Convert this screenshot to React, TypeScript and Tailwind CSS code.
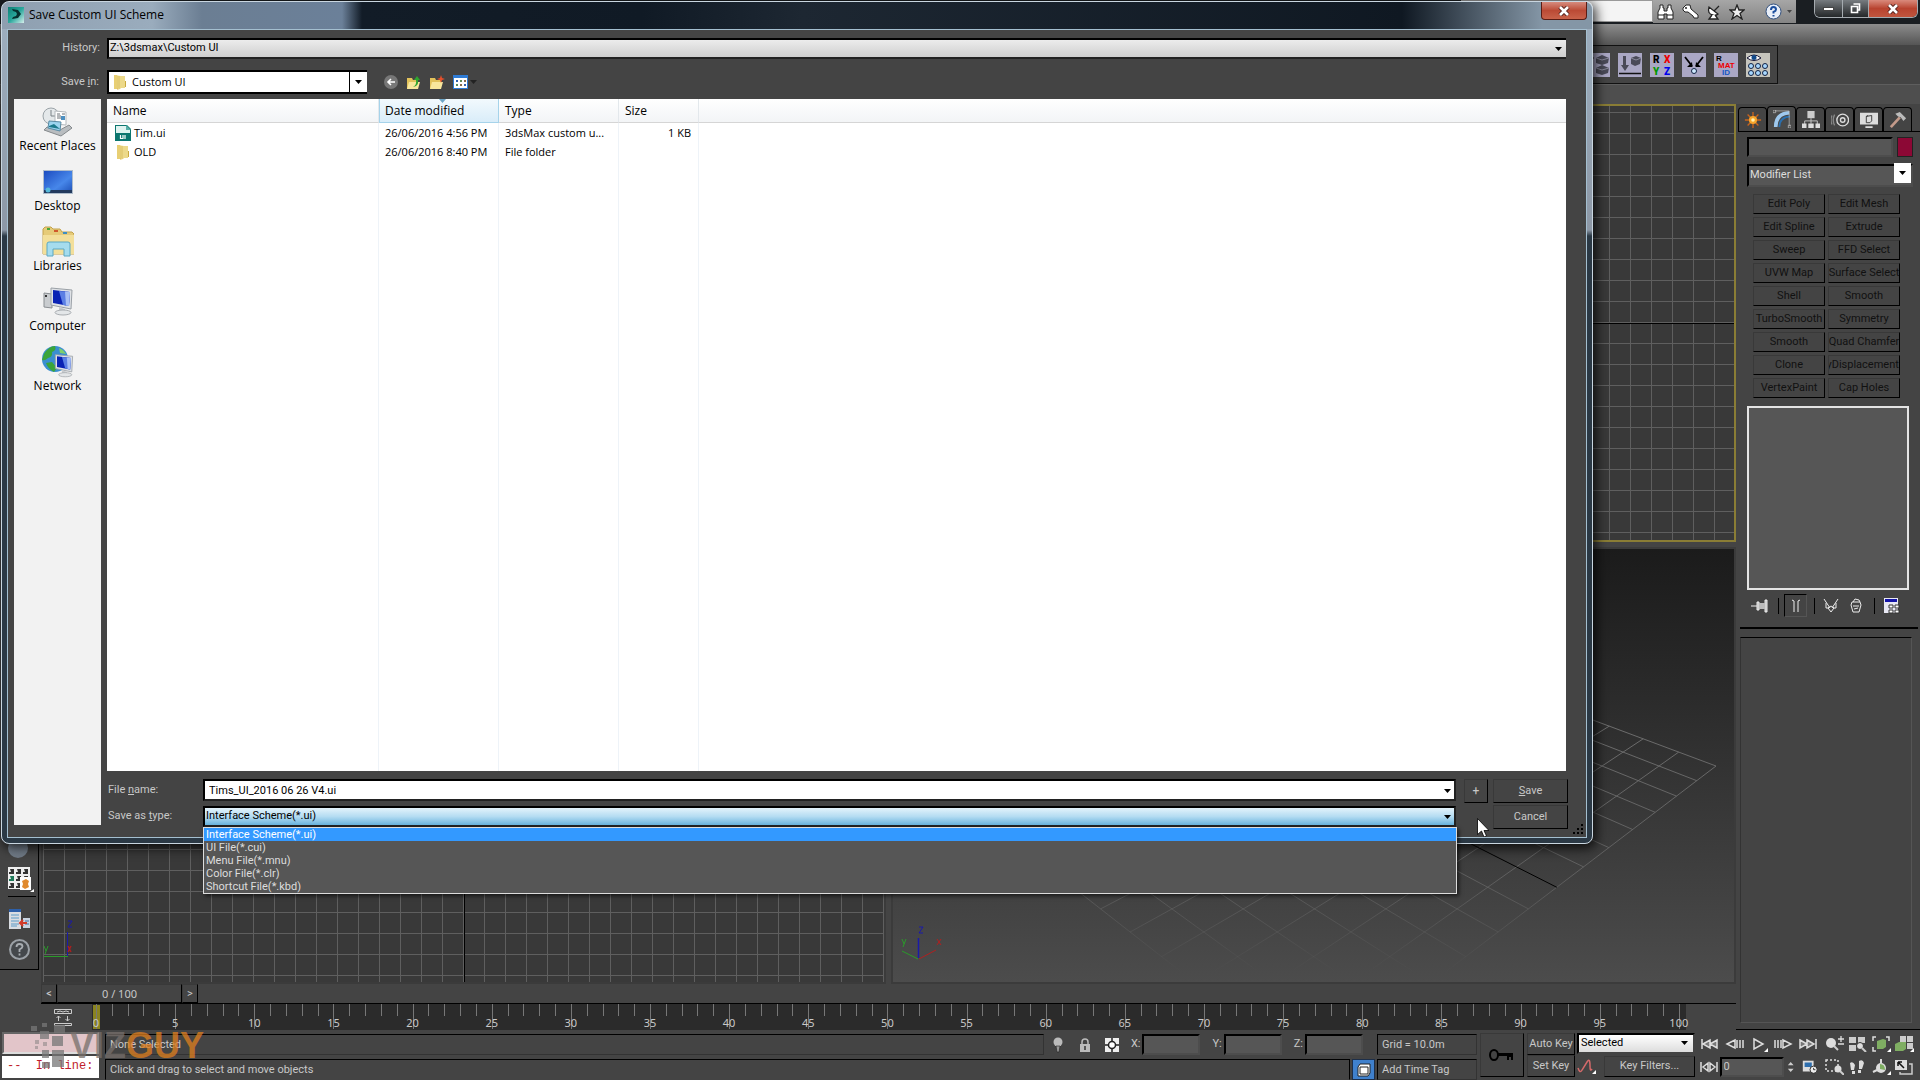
import type { ReactNode } from "react";
import { clsx } from "clsx";

const MODIFIERS = [
  "Edit Poly", "Edit Mesh",
  "Edit Spline", "Extrude",
  "Sweep", "FFD Select",
  "UVW Map", "Surface Select",
  "Shell", "Smooth",
  "TurboSmooth", "Symmetry",
  "Smooth", "Quad Chamfer",
  "Clone", "yDisplacementl",
  "VertexPaint", "Cap Holes",
];

const FILE_TYPES = [
  "Interface Scheme(*.ui)",
  "UI File(*.cui)",
  "Menu File(*.mnu)",
  "Color File(*.clr)",
  "Shortcut File(*.kbd)",
];

// Sunken fields have a black top and left edge, raised buttons a black bottom and right one.
const SUNKEN = "border-2 border-t-black border-l-black border-r-[#4d4d4d] border-b-[#4d4d4d]";
const RAISED = "border border-t-[#393939] border-l-[#393939] border-r-black border-b-black";

function Caret({ className }: { className?: string }) {
  return (
    <svg className={clsx("pointer-events-none", className)} width="7" height="4" viewBox="0 0 7 4" aria-hidden="true">
      <path d="M0 0h7L3.5 4z" fill="#000" />
    </svg>
  );
}

function FolderIcon() {
  return (
    <svg width="14" height="16" viewBox="0 0 14 16" aria-hidden="true">
      <path d="M1 1h4v14H1z" fill="#e8cf74" />
      <path d="M4 1l4 1v13l-4-1z" fill="#f6e9ae" />
      <path d="M7 2h5v12H7z" fill="#ecd98a" />
      <path d="M7 2v13l-3 1V2z" fill="#dcbf5e" opacity=".7" />
      <path d="M12 7h1v6h-1z" fill="#c9a93f" />
    </svg>
  );
}

function UiFileIcon() {
  return (
    <svg width="16" height="16" viewBox="0 0 16 16" aria-hidden="true">
      <path d="M0 0h12l4 4v12H0z" fill="#0c766f" />
      <path d="M1 1h10v4h4v3H1z" fill="#dff3f0" />
      <path d="M11 0l5 5h-5z" fill="#58b0a9" />
      <path d="M5.500 10v3.500h2.500V10M10 10v4" fill="none" stroke="#fff" strokeWidth="1.200" />
    </svg>
  );
}

function MaxLogo() {
  return (
    <svg width="16" height="16" viewBox="0 0 16 16" aria-hidden="true">
      <defs>
        <linearGradient id="logo" x1="0" y1="0" x2="1" y2="1">
          <stop offset="0" stopColor="#0d7f76" />
          <stop offset=".5" stopColor="#2aa79c" />
          <stop offset="1" stopColor="#d6efec" />
        </linearGradient>
      </defs>
      <rect width="16" height="16" fill="url(#logo)" />
      <path d="M4 2l6 1 3 4-3 4-6 1 1-2 3-1 1-2-1-2-3-1z" fill="#06302f" />
    </svg>
  );
}

function RecentPlacesIcon() {
  return (
    <svg width="32" height="32" viewBox="0 0 32 32" aria-hidden="true">
      <circle cx="9" cy="10" r="8" fill="#e4e8ea" stroke="#9ba3a8" />
      <path d="M9 4v6h4" stroke="#7b8287" fill="none" />
      <path d="M13 5l11 1v13l-11-1z" fill="#fff" stroke="#b3b8bc" />
      <path d="M15 8h3M20 8h3M15 10h4M15 12h4" stroke="#6c7378" />
      <path d="M19 10h4v4h-4z" fill="#4d8fc0" />
      <path d="M2 24l17 6 11-8-3-3-9 5-13-3z" fill="#b9bdc0" stroke="#85898c" />
      <path d="M7 15l12 1-1 9-12-3z" fill="#9cd4ef" stroke="#5a8ba5" />
      <path d="M7 20l5-2 6 5-11-2z" fill="#1c7a8c" />
    </svg>
  );
}

function DesktopIcon() {
  return (
    <svg width="32" height="32" viewBox="0 0 32 32" aria-hidden="true">
      <defs>
        <linearGradient id="desk" x1="0" y1="0" x2="1" y2="1">
          <stop offset="0" stopColor="#1c4cc0" />
          <stop offset=".6" stopColor="#4787ea" />
          <stop offset="1" stopColor="#1d4fb6" />
        </linearGradient>
      </defs>
      <rect x="1" y="4" width="30" height="24" fill="#aebccb" />
      <rect x="2" y="5" width="28" height="22" fill="url(#desk)" />
      <path d="M2 24h28v3H2z" fill="#233a5e" />
      <circle cx="6" cy="24" r="2.500" fill="#56b9d9" />
    </svg>
  );
}

function LibrariesIcon() {
  return (
    <svg width="32" height="32" viewBox="0 0 32 32" aria-hidden="true">
      <path d="M1 3l2-2h6l2 2h7l2 3h10l2 2v20H1z" fill="#e6cb79" stroke="#c3a24c" />
      <path d="M5 2h3v2H5z" fill="#47a83c" />
      <path d="M12 4h4v2h-4z" fill="#d0592c" />
      <path d="M21 6h4v2h-4z" fill="#3f8fc4" />
      <path d="M1 9h31v19H1z" fill="#f3df9a" />
      <path d="M5 18q0-2 2-2h19q2 0 2 2v12h-6v-7H11v7H5z" fill="#a5dcee" stroke="#5aa8c4" />
    </svg>
  );
}

function Monitor() {
  return (
    <>
      <path d="M9 2l21 2-1 19-20-4z" fill="#dfe2e6" stroke="#9aa0a6" />
      <path d="M11 4l17 2-1 14-16-3z" fill="#0a22b4" />
      <path d="M17 5l11 1-1 14-6-1z" fill="#5b7fe4" />
      <path d="M23 5.500l5 .5-1 14-3-.5z" fill="#a9c0f4" />
      <path d="M17 21l6 2v3h-6z" fill="#c7cbcf" />
      <ellipse cx="21" cy="26.500" rx="8" ry="2.500" fill="#e3e6e8" stroke="#a9adb1" />
    </>
  );
}

function ComputerIcon() {
  return (
    <svg width="32" height="32" viewBox="0 0 32 32" aria-hidden="true">
      <path d="M2 7l8 1v14l-8-1z" fill="#c9cccf" stroke="#8a8e92" />
      <path d="M3 10h2" stroke="#333" strokeWidth="2" />
      <Monitor />
    </svg>
  );
}

function NetworkIcon() {
  return (
    <svg width="32" height="32" viewBox="0 0 32 32" aria-hidden="true">
      <circle cx="13" cy="13" r="13" fill="#3b8fd0" />
      <path d="M2 8q5-8 11-8 2 4-3 6 1 5-4 6-3 3-6 2zM4 17l6-1 5 6-3 4q-6-3-8-9z" fill="#3ba53a" />
      <path d="M17 2q5 2 7 6l-6-1z" fill="#7fd06c" />
      <g transform="translate(6 7) scale(.82)">
        <Monitor />
      </g>
    </svg>
  );
}

const PLACES = [
  { name: "Recent Places", Icon: RecentPlacesIcon },
  { name: "Desktop", Icon: DesktopIcon },
  { name: "Libraries", Icon: LibrariesIcon },
  { name: "Computer", Icon: ComputerIcon },
  { name: "Network", Icon: NetworkIcon },
];

function CloseGlyph() {
  return (
    <svg width="12" height="10" viewBox="0 0 12 10" aria-hidden="true">
      <path d="M2 1l8 8M10 1L2 9" stroke="#53201a" strokeWidth="4.500" />
      <path d="M2 1l8 8M10 1L2 9" stroke="#fff" strokeWidth="2.600" />
    </svg>
  );
}

/* ---------- Application frame behind the dialog ---------- */

function TopBar() {
  return (
    <header>
      <div className="flex h-6 justify-end bg-[#1a1e22]">
        <input
          aria-label="Type a keyword or phrase"
          className="h-[22px] w-48 border border-[#999] bg-[#f4f4f4] px-2 text-[11px]"
        />
        <div className="flex h-[23px] w-[143px] items-center gap-2 bg-gradient-to-b from-[#a6a6a6] to-[#858585] pl-1">
          <button aria-label="Search">
            <svg width="17" height="16" viewBox="0 0 17 16">
              <path d="M3 1h3v3h1v3h3V4h1V1h3v3l2 4v7h-6v-5H7v5H1V8l2-4z" fill="#fff" stroke="#222" />
              <path d="M1 11h6M10 11h6" stroke="#222" />
            </svg>
          </button>
          <button aria-label="Subscription">
            <svg width="17" height="16" viewBox="0 0 17 16">
              <path d="M1 4l3-3h4l1 4 7 6v3h-4l-1-2-5-4H3L1 6z" fill="#fff" stroke="#222" />
              <circle cx="4" cy="4" r="1" fill="#222" />
            </svg>
          </button>
          <button aria-label="Exchange">
            <svg width="14" height="16" viewBox="0 0 14 16">
              <path d="M2 3q-2 7 4 8 3 1 5-1z" fill="#fff" stroke="#222" strokeWidth="1.300" />
              <path d="M7 7l5-5M5 11l-3 4h9l-3-4" fill="#fff" stroke="#222" strokeWidth="1.300" />
            </svg>
          </button>
          <button aria-label="Favorites">
            <svg width="16" height="16" viewBox="0 0 16 16">
              <path d="M8 1l2 5h5l-4 3.500L13 15l-5-3.500L3 15l2-5.500L1 6h5z" fill="#eee" stroke="#222" strokeWidth="1.300" />
            </svg>
          </button>
          <button aria-label="Help" className="ml-3 flex items-center gap-[5px]">
            <svg width="17" height="17" viewBox="0 0 17 17">
              <circle cx="8.500" cy="8.500" r="7.500" fill="#e8eef8" stroke="#33517f" />
              <path d="M6 7q0-3 2.500-3T11 6.500Q11 8 8.500 9v1.500M8.500 12v1.600" fill="none" stroke="#1d4f9e" strokeWidth="2" />
            </svg>
            <svg width="5" height="3" viewBox="0 0 5 3">
              <path d="M0 0h5L2.500 3z" fill="#444" />
            </svg>
          </button>
        </div>
        <div className="flex w-[124px] items-start justify-end pr-[2px]">
          <div className="flex overflow-hidden rounded-b-md border border-t-0 border-[#a5abb0]">
            <button aria-label="Minimize" className="flex h-[17px] w-[28px] items-center justify-center border-r border-[#a5abb0] bg-gradient-to-b from-[#777c80] to-[#25282a]">
              <span className="h-1 w-[11px] border border-[#444] bg-white" />
            </button>
            <button aria-label="Restore" className="flex h-[17px] w-[26px] items-center justify-center border-r border-[#a5abb0] bg-gradient-to-b from-[#777c80] to-[#25282a]">
              <svg width="11" height="11" viewBox="0 0 11 11">
                <path d="M3.500 1h6v6h-2M1.500 3.500h6v6h-6z" fill="none" stroke="#fff" strokeWidth="1.600" />
              </svg>
            </button>
            <button aria-label="Close" className="flex h-[17px] w-[48px] items-center justify-center bg-gradient-to-b from-[#d98a7c] via-[#b8432f] to-[#c0553e]">
              <CloseGlyph />
            </button>
          </div>
        </div>
      </div>
      <div className="h-[21px] bg-gradient-to-b from-[#8d8d8d] to-[#555]" />
      <div className="flex h-[39px] justify-end bg-[#444] pr-[142px]">
        <div className="flex h-[39px] items-center gap-2 border-t border-r border-b border-[#111] pr-[7px]">
          <svg width="24" height="24" viewBox="0 0 24 24" aria-hidden="true">
            <rect width="24" height="24" fill="#aaa7c4" />
            <path d="M3 5h5M5 3v5" stroke="#333" />
            <path d="M10 5l6-3 7 3-1 5-6 2-6-2zM10 15l6-3 7 3-1 5-6 2-6-2z" fill="#4a4a58" />
            <path d="M10 5l6 2 7-2M10 15l6 2 7-2" stroke="#8a8a9c" fill="none" />
          </svg>
          <svg width="24" height="24" viewBox="0 0 24 24" aria-hidden="true">
            <rect width="24" height="24" fill="#aaa7c4" />
            <path d="M5 3h3v9h3l-4 6-4-6h2zM13 5l5-2 5 2-1 6-5 2-4-2z" fill="#4a4a58" />
            <path d="M13 5l5 2 5-2" stroke="#8a8a9c" fill="none" />
            <path d="M1 20.500h22" stroke="#111" strokeWidth="1.500" />
          </svg>
          <svg width="24" height="24" viewBox="0 0 24 24" aria-hidden="true" className="text-[10px] font-black">
            <rect width="24" height="24" fill="#aaa7c4" />
            <text x="3" y="10">R</text>
            <text x="14" y="10" fill="#e00">X</text>
            <text x="3" y="22" fill="#090">Y</text>
            <text x="14" y="22" fill="#00e">Z</text>
          </svg>
          <svg width="24" height="24" viewBox="0 0 24 24" aria-hidden="true">
            <rect width="24" height="24" fill="#aaa7c4" />
            <path d="M3 4l7 9M21 4l-7 9" stroke="#000" strokeWidth="1.800" />
            <path d="M10.500 14H5l5-5zM13.500 14H19l-5-5z" fill="#000" />
            <circle cx="12" cy="18" r="2.500" fill="#cfeaff" stroke="#124" />
          </svg>
          <svg width="24" height="24" viewBox="0 0 24 24" aria-hidden="true" className="font-['Liberation_Sans',sans-serif] text-[8px] font-bold">
            <rect width="24" height="24" fill="#aaa7c4" />
            <text x="2" y="8">R</text>
            <text x="4" y="15" fill="#e00">MAT</text>
            <text x="8" y="22" fill="#1458c8">ID</text>
          </svg>
          <svg width="24" height="24" viewBox="0 0 24 24" aria-hidden="true">
            <rect width="24" height="24" fill="#c6c5bd" />
            <path d="M1 5q7-6 14 0-7 5-14 0z" fill="#fff" stroke="#113" />
            <circle cx="8" cy="4.500" r="2.500" fill="#124a8a" />
            {[5, 12, 19].map((x) => (
              <g key={x} fill="#a8d8ff" stroke="#124">
                <circle cx={x} cy="13" r="2.500" />
                <circle cx={x} cy="20" r="2.500" />
              </g>
            ))}
          </svg>
        </div>
      </div>
      <div className="h-5 border-t border-[#5e5e5e] bg-[#4e4e4e]" />
    </header>
  );
}

function LeftTools() {
  return (
    <div className="mb-[60px] flex w-[39px] flex-none flex-col justify-end border-r border-b border-black pb-2 pl-2">
      <div className="h-5 w-5 rounded-full bg-gradient-to-b from-[#8a97a6] to-[#6e7884]" />
      <svg className="mt-[9px]" width="27" height="27" viewBox="0 0 27 27" aria-hidden="true">
        <rect width="22" height="22" fill="#eee" />
        {[2, 9, 16].map((x) =>
          [2, 9, 16].map((y) => (
            <path key={`${x}${y}`} d={`M${x} ${y}h4v5h-5v-2h2z`} fill={y === 9 && x === 2 ? "#1f7a5a" : "#333"} />
          )),
        )}
        <rect x="12" y="10" width="11" height="13" fill="#fff" />
        <path d="M14 14l4-2 3 2-1 3 1 3-4 2-3-2 1-3z" fill="#e08a2e" />
        <path d="M26 22v3h-4z" fill="#fff" />
      </svg>
      <hr className="mt-[2px] w-[28px] border-black" />
      <svg className="mt-3" width="23" height="21" viewBox="0 0 23 21" aria-hidden="true">
        <path d="M1 1h12v19H1z" fill="#d9dde2" />
        <path d="M1 0h12v3H1z" fill="#2d5fa8" />
        <path d="M3 6h8M3 9h8M3 12h8M3 15h8M3 17h6" stroke="#5d9bc7" />
        <path d="M15 9h7v10h-7z" fill="#c9d4e2" />
        <path d="M17 12h4M17 15h4" stroke="#3d6ea5" />
        <path d="M19 14h-7m3-3l-3 3 3 3" stroke="#d23a2a" strokeWidth="2" fill="none" />
      </svg>
      <button aria-label="Help" className="mt-2">
        <svg width="23" height="23" viewBox="0 0 23 23">
          <circle cx="11.500" cy="11.500" r="9.500" fill="#44484c" stroke="#9aa0a6" strokeWidth="2" />
          <path d="M8.500 9q0-3 3-3t3 2.500q0 1.500-3 3V14M11.500 15.500v2" fill="none" stroke="#a8adb2" strokeWidth="1.800" />
        </svg>
      </button>
    </div>
  );
}

// Perspective projection of the 14 x 14 ground grid; (0, 0) is its right-hand corner.
function project(i: number, j: number) {
  const d = i - j;
  const w = 1 - 0.02506 * d;
  return `${((826 - 39.45 * d - 57 * j) / w).toFixed(1)} ${((218 + 8.82 * d) / w).toFixed(1)}`;
}

const GROUND = Array.from({ length: 15 }, (_, n) => n)
  .filter((n) => n !== 7)
  .map((n) => `M${project(n, 0)}L${project(n, 14)}M${project(0, n)}L${project(14, n)}`)
  .join("");

const GROUND_AXES = `M${project(7, 0)}L${project(7, 14)}M${project(0, 7)}L${project(14, 7)}`;

function Viewports() {
  return (
    <div className="grid min-h-0 flex-1 grid-cols-2 grid-rows-2 gap-[5px]">
      <div className="bg-[#393939]" />
      <div className="relative border-2 border-[#8a7d35] bg-[#393939] bg-[linear-gradient(to_right,#5f5f5f_1px,transparent_1px),linear-gradient(to_bottom,#5f5f5f_1px,transparent_1px)] bg-[size:21px_21px] bg-[position:2px_6px]">
        <div className="absolute inset-x-0 top-1/2 h-px bg-black" />
      </div>
      <div className="relative border-2 border-[#3b3b3b] bg-[#393939] bg-[linear-gradient(to_right,#5f5f5f_1px,transparent_1px),linear-gradient(to_bottom,#5f5f5f_1px,transparent_1px)] bg-[size:21px_21px] bg-[position:0px_6px]">
        <div className="absolute inset-y-0 left-1/2 w-px bg-black" />
        <svg className="absolute bottom-6 left-0" width="32" height="44" viewBox="0 0 32 44" aria-hidden="true">
          <path d="M24.500 18v24" stroke="#1a1aa8" />
          <path d="M1 42.500h24" stroke="#2a9a2a" />
          <path d="M25 7h4l-4 6h4" stroke="#1a1aa8" fill="none" />
          <path d="M1 32l2 5M5 32l-3 8" stroke="#2a9a2a" fill="none" />
          <path d="M25 32l3 6M28 32l-3 6" stroke="#a82020" strokeWidth="1.500" />
        </svg>
      </div>
      <div className="relative overflow-hidden border-2 border-[#3b3b3b] bg-gradient-to-b from-[#1b1b1b] to-[#4c4c4c]">
        <svg className="absolute right-0 bottom-0" width="842" height="432" viewBox="2 2 842 432" aria-hidden="true">
          <defs>
            <linearGradient id="fade" gradientUnits="userSpaceOnUse" x1="0" y1="180" x2="0" y2="425">
              <stop offset="0" stopColor="#6c6c6c" />
              <stop offset=".6" stopColor="#6c6c6c" stopOpacity=".7" />
              <stop offset="1" stopColor="#6c6c6c" stopOpacity="0" />
            </linearGradient>
          </defs>
          <path d={GROUND} fill="none" stroke="url(#fade)" />
          <path d={GROUND_AXES} stroke="#000" />
        </svg>
        <svg className="absolute bottom-5 left-2" width="42" height="36" viewBox="0 0 42 36" aria-hidden="true">
          <path d="M17.500 12v20" stroke="#1a1aa8" strokeWidth="1.500" />
          <path d="M17 33L1 25" stroke="#2a9a2a" />
          <path d="M18 33l17-9" stroke="#b02020" />
          <path d="M18 1h4l-4 6h4" stroke="#1a1aa8" fill="none" />
          <path d="M1 13l2 5M5 13l-3 8" stroke="#2a9a2a" fill="none" />
          <path d="M36 13l4 6M40 13l-4 6" stroke="#b02020" fill="none" />
        </svg>
      </div>
    </div>
  );
}

function Timeline() {
  return (
    <>
      <div className="flex h-[19px] flex-none">
        <button aria-label="Previous frame" className={clsx("w-4 text-[11px] leading-[15px]", RAISED)}>&lt;</button>
        <button className={clsx("w-[125px] font-['Noto_Sans',sans-serif] text-[11px] leading-[15px]", RAISED)}>0 / 100</button>
        <button aria-label="Next frame" className={clsx("w-4 text-[11px] leading-[15px]", RAISED)}>&gt;</button>
      </div>
      <div className="flex h-[27px] flex-none border-t border-black">
        <div className="flex w-[51px] flex-none justify-center pt-1 pr-2">
          <svg width="18" height="18" viewBox="0 0 18 18" aria-hidden="true">
            <path d="M.5 1.500h17v4H.5zM.5 17.500v-2h17v2zM3 4l3-1 3 1 3-1 3 1M4.500 13V8M2.500 10l2-2 2 2M13.500 8v5M11.500 11l2 2 2-2" fill="none" stroke="#ccc" />
          </svg>
        </div>
        <div className="relative mr-[50px] flex flex-1 bg-[#2b2b2b] pr-[6px] pl-1">
          <div className="absolute top-px left-px h-6 w-[7px] bg-[#8a8420]" />
          {Array.from({ length: 101 }, (_, i) => (
            <div key={i} className={clsx("relative", i < 100 && "flex-1")}>
              <div className={clsx("w-px bg-[#777]", i % 5 === 0 ? "h-[25px]" : "h-3")} />
              {i % 5 === 0 && (
                <span className="absolute top-3 left-0 -translate-x-1/2 font-['Noto_Sans',sans-serif] text-[11px] leading-[14px]">{i}</span>
              )}
            </div>
          ))}
        </div>
      </div>
    </>
  );
}

const TABS: { name: string; icon: ReactNode }[] = [
  {
    name: "Create",
    icon: (
      <>
        <path d="M10 1v18M1 10h18M4 4l12 12M16 4L4 16" stroke="#c8641c" strokeWidth="1.500" />
        <circle cx="10" cy="10" r="4.500" fill="#f7a52c" />
        <circle cx="10" cy="10" r="2" fill="#fff3b0" />
      </>
    ),
  },
  {
    name: "Modify",
    icon: (
      <>
        <path d="M3 19Q3 4 18 3" stroke="#9fc9ee" strokeWidth="4" fill="none" />
        <path d="M7 19q0-11 12-12" stroke="#2a6fae" strokeWidth="2" fill="none" />
        <path d="M0 0h3v3H0zM17 17h3v3h-3zM2 1h16v17" stroke="#ccc" fill="none" strokeWidth=".7" />
      </>
    ),
  },
  {
    name: "Hierarchy",
    icon: (
      <>
        <path d="M6 0h8v8H6z" fill="#ccc" />
        <path d="M10 8v6M3 15v-4h14v4" stroke="#ccc" fill="none" />
        <path d="M0 14h5v5H0zM7 14h6v5H7zM15 14h5v5h-5z" fill="#ddd" />
      </>
    ),
  },
  {
    name: "Motion",
    icon: (
      <g fill="none" stroke="#ddd" strokeWidth="1.500">
        <circle cx="13" cy="10" r="6.500" />
        <circle cx="13" cy="10" r="2.500" />
        <path d="M4 4q-3 6 0 12M1 5q-2 5 0 10" stroke="#888" />
      </g>
    ),
  },
  {
    name: "Display",
    icon: (
      <>
        <path d="M0 2h20v13H0zM6 17h8v2H6z" fill="#ddd" />
        <path d="M7 6l6-1v6l-2 2H7zM7 6l2-1" fill="none" stroke="#333" />
      </>
    ),
  },
  {
    name: "Utilities",
    icon: (
      <>
        <path d="M12 7L2 18" stroke="#c39a8a" strokeWidth="3" />
        <path d="M7 3l5-2 7 7-3 3-3-4-3-1z" fill="#bbb" />
      </>
    ),
  },
];

function CommandPanel() {
  return (
    <aside className="flex w-[184px] flex-none flex-col border-b border-black pl-[2px]">
      <div className="flex h-7 items-end border-b border-black">
        {TABS.map(({ name, icon }, i) => (
          <button
            key={name}
            aria-label={name}
            className={clsx(
              "flex w-[29px] items-center justify-center rounded-t border-x border-t border-black",
              i === 1 ? "h-[25px] bg-[#4a4a4a]" : "h-6",
            )}
          >
            <svg width="18" height="18" viewBox="0 0 20 20">{icon}</svg>
          </button>
        ))}
      </div>
      <div className="flex flex-1 flex-col pr-[7px] pl-[9px]">
        <div className="mt-[5px] flex gap-1">
          <input aria-label="Object name" className={clsx("h-5 min-w-0 flex-1 bg-[#565656] px-1 text-[11px]", SUNKEN)} />
          <button aria-label="Object color" className="h-5 w-4 border border-[#222] bg-[#8c0835]" />
        </div>
        <div className="relative mt-1">
          <select aria-label="Modifier List" className={clsx("h-[23px] w-full appearance-none bg-[#565656] px-px text-[11px] text-[#ddd]", SUNKEN)}>
            <option>Modifier List</option>
          </select>
          <span className="pointer-events-none absolute top-[2px] right-[2px] flex h-5 w-[17px] items-center justify-center bg-white">
            <Caret />
          </span>
        </div>
        <div className="mt-[7px] mr-[13px] ml-[6px] grid grid-cols-2 gap-[3px]">
          {MODIFIERS.map((name, i) => (
            <button
              key={i}
              className={clsx("flex h-5 items-center justify-center overflow-hidden text-[11px] whitespace-nowrap text-[#111]", RAISED)}
            >
              {name}
            </button>
          ))}
        </div>
        <div className="mt-2 mr-1 h-[184px] border-2 border-[#e4e4e4] bg-[#565656]" />
        <div className="mt-1 flex h-6 items-center pl-[3px]">
          <button aria-label="Pin stack" className="w-7">
            <svg width="18" height="14" viewBox="0 0 18 14">
              <path d="M1 7h6M7 3h2v8H7zM15 1h2v12h-2z" stroke="#eee" fill="#bbb" />
              <path d="M9 4h6v6H9z" fill="#bbb" />
            </svg>
          </button>
          <span className="mr-[5px] h-4 w-px bg-black" />
          <button aria-label="Show end result" className="flex h-[23px] w-[23px] items-center justify-center border border-t-black border-r-[#555] border-b-[#555] border-l-black">
            <svg width="10" height="16" viewBox="0 0 10 16">
              <path d="M1 2l2 1v11M9 2L7 3v11" stroke="#eee" fill="none" />
            </svg>
          </button>
          <span className="mx-[7px] h-4 w-px bg-black" />
          <button aria-label="Make unique" className="w-6">
            <svg width="18" height="16" viewBox="0 0 18 16">
              <path d="M2 1l6 9M16 1l-6 9M4 5v5h3M14 5v5h-3M6 10l3 4 3-4-3-2z" stroke="#eee" fill="none" />
            </svg>
          </button>
          <button aria-label="Remove modifier" className="flex w-7 pl-[3px]">
            <svg width="14" height="16" viewBox="0 0 14 16">
              <path d="M3 4h8l1 3-2 7H4L2 7zM4 4l2-3 4 1 1 2M4 8h6M5 11l4-1" stroke="#eee" fill="none" />
            </svg>
          </button>
          <span className="mr-[9px] h-4 w-px bg-black" />
          <button aria-label="Configure modifier sets">
            <svg width="16" height="16" viewBox="0 0 16 16">
              <path d="M0 0h14v15H0z" fill="#e8e8f4" />
              <path d="M1 1h12v3H1z" fill="#1414a8" />
              <path d="M5 7h4v3H5zM11 7h4v3h-4zM5 12h4v3H5zM11 12h4v3h-4z" fill="#fff" stroke="#333" />
            </svg>
          </button>
        </div>
      </div>
      <div className="mx-[2px] h-0 border-t-2 border-black" />
      <div className="mt-2 mr-2 mb-[6px] ml-[2px] h-[386px] border border-t-black border-r-[#555] border-b-[#555] border-l-[#333]" />
    </aside>
  );
}

function Coordinate({ axis }: { axis: string }) {
  return (
    <label className="ml-3 flex items-center gap-[2px] text-[11px]">
      {axis}:
      <input className={clsx("h-[21px] w-[58px] bg-[#565656] px-1", SUNKEN)} />
    </label>
  );
}

function IconButton({ label, size = 20, children }: { label: string; size?: number; children: ReactNode }) {
  return (
    <button aria-label={label} className="flex h-[21px] flex-1 items-center justify-center">
      <svg width={size} height="16" viewBox="0 0 20 16">{children}</svg>
    </button>
  );
}

function StatusBar() {
  return (
    <footer className="flex h-[50px] flex-none gap-[2px] pl-[2px] text-[11px]">
      <div className="flex w-[97px] flex-none flex-col gap-[2px] py-[2px]">
        <div className="h-[22px] border-2 border-t-[#666] border-l-[#666] border-r-[#ddd] border-b-[#ddd] bg-[#e2c5c9]" />
        <div className="h-[22px] bg-white pl-[5px] font-['Liberation_Mono',monospace] text-[12px] leading-5 whitespace-pre text-[#c01c2c]">
          --  In line:
        </div>
      </div>
      <div className="ml-1 flex min-w-0 flex-1 flex-col gap-1 pt-1">
        <div className="flex h-[21px] items-center">
          <div className="h-[21px] flex-1 border border-t-black border-r-[#333] border-b-[#333] border-l-black pl-1 leading-[20px]">None Selected</div>
          <button aria-label="Isolate selection" className="ml-2">
            <svg width="12" height="16" viewBox="0 0 12 16">
              <circle cx="6" cy="5" r="4.500" fill="#bbb" />
              <path d="M4 9h4l-1 6H5z" fill="#999" stroke="#222" strokeWidth=".6" />
            </svg>
          </button>
          <button aria-label="Selection lock" className="ml-[15px]">
            <svg width="12" height="14" viewBox="0 0 12 14">
              <path d="M3 7V4q0-3 3-3t3 3v3" fill="none" stroke="#bbb" strokeWidth="1.500" />
              <path d="M1 6h10v8H1z" fill="#bbb" />
              <path d="M6 8v4" stroke="#333" strokeWidth="1.500" />
            </svg>
          </button>
          <button aria-label="Transform type-in mode" className="ml-[14px]">
            <svg width="14" height="14" viewBox="0 0 14 14">
              <path d="M0 0h14v14H0z" fill="#eee" />
              <circle cx="7" cy="7" r="3.500" fill="#fff" stroke="#222" strokeWidth="1.500" />
              <path d="M7 0v3M7 11v3M0 7h3M11 7h3" stroke="#222" strokeWidth="1.500" />
            </svg>
          </button>
          <Coordinate axis="X" />
          <Coordinate axis="Y" />
          <Coordinate axis="Z" />
          <div className="ml-[14px] h-[21px] w-[100px] border border-t-black border-r-[#333] border-b-[#333] border-l-black pl-1 leading-[20px]">Grid = 10.0m</div>
        </div>
        <div className="flex h-[21px]">
          <div className="flex-1 border border-t-black border-r-black border-b-[#444] border-l-black pl-1 leading-[20px]">
            Click and drag to select and move objects
          </div>
          <button aria-label="Adaptive degradation" className="mx-[2px] flex h-[21px] w-[23px] items-center justify-center border border-[#1d2f4a] bg-[#3f80cc]">
            <svg width="14" height="14" viewBox="0 0 14 14">
              <path d="M1 4l2-3h10v9l-2 3H1z" fill="#fff" stroke="#222" />
              <path d="M3 4h8v7H3z" fill="#fff" stroke="#222" />
            </svg>
          </button>
          <button className="h-[21px] w-[100px] border border-t-black border-r-[#333] border-b-[#333] border-l-black pl-1 text-left leading-[19px]">
            Add Time Tag
          </button>
        </div>
      </div>
      <button aria-label="Set keys" className={clsx("mt-[3px] ml-px flex h-11 w-11 flex-none items-center justify-center", RAISED)}>
        <svg width="26" height="14" viewBox="0 0 26 14">
          <path d="M8 5h16v7h-2V9h-2v3h-2V8H8z" fill="#000" />
          <ellipse cx="5" cy="7" rx="4" ry="5" fill="none" stroke="#000" strokeWidth="2" />
        </svg>
      </button>
      <div className="mt-[3px] ml-px flex w-12 flex-none flex-col whitespace-nowrap">
        <button className={clsx("h-[22px]", RAISED)}>Auto Key</button>
        <button className={clsx("h-[22px]", RAISED)}>Set Key</button>
      </div>
      <div className="mt-[3px] flex w-[118px] flex-none flex-col gap-[2px]">
        <div className="relative">
          <select aria-label="Key set" className="h-[21px] w-full appearance-none border-2 border-t-black border-r-[#444] border-b-[#444] border-l-black bg-gradient-to-b from-white to-[#ddd] px-[2px] text-black">
            <option>Selected</option>
          </select>
          <Caret className="absolute top-2 right-[7px]" />
        </div>
        <div className="flex">
          <button aria-label="Default tangents" className="w-[27px]">
            <svg width="20" height="17" viewBox="0 0 20 17">
              <path d="M1 10q2 6 4 2l5-8q3-5 3 4 0 6 2 3" fill="none" stroke="#d46a6a" strokeWidth="1.500" />
              <path d="M19 12v4h-4z" fill="#fff" />
            </svg>
          </button>
          <button className={clsx("h-[21px] flex-1", RAISED)}>Key Filters...</button>
        </div>
      </div>
      <div className="mt-[3px] ml-px flex w-[122px] flex-none flex-col gap-[2px]">
        <div className="flex">
          <IconButton label="Go to start"><path d="M2 3v10M3 8l7-4v8zM10 8l7-4v8z" stroke="#ddd" strokeWidth="1.500" fill="#777" /></IconButton>
          <IconButton label="Previous frame"><path d="M2 8l8-4v8zM12 4v8M15 4v8M18 4v8" stroke="#ddd" strokeWidth="1.500" fill="none" /></IconButton>
          <IconButton label="Play"><path d="M5 3l9 5-9 5z" stroke="#ddd" strokeWidth="1.500" fill="none" /><path d="M19 12v4h-4z" fill="#fff" /></IconButton>
          <IconButton label="Next frame"><path d="M2 4v8M5 4v8M8 4v8M10 4l8 4-8 4z" stroke="#ddd" strokeWidth="1.500" fill="none" /></IconButton>
          <IconButton label="Go to end"><path d="M2 4l7 4-7 4zM9 4l7 4-7 4zM18 3v10" stroke="#ddd" strokeWidth="1.500" fill="#777" /></IconButton>
        </div>
        <div className="flex items-center">
          <span className="flex w-[26px]">
            <IconButton label="Key mode"><path d="M2 3v10M18 3v10M9 4L4 8l5 4zM11 4l5 4-5 4z" stroke="#ddd" strokeWidth="1.500" fill="none" /></IconButton>
          </span>
          <input aria-label="Current frame" defaultValue="0" className={clsx("h-5 w-[64px] bg-[#565656] px-[2px]", SUNKEN)} />
          <svg className="ml-[3px]" width="9" height="14" viewBox="0 0 9 14" aria-hidden="true">
            <path d="M4.500 1L8 5H1zM4.500 13L8 9H1z" fill="#ccc" />
          </svg>
          <span className="ml-[6px] flex w-5 flex-none">
            <IconButton label="Time configuration" size={18}>
              <path d="M2 1h12v12H2z" fill="#ddd" />
              <path d="M4 3h8v5H4z" fill="#2f6fae" />
              <circle cx="14" cy="11" r="4" fill="#eee" stroke="#222" />
              <path d="M14 9v2h2" stroke="#222" fill="none" />
            </IconButton>
          </span>
        </div>
      </div>
      <div className="mt-[3px] mr-1 grid w-[94px] flex-none grid-cols-4 content-start gap-y-[2px]">
        <IconButton label="Zoom"><circle cx="7" cy="7" r="5" fill="#ddd" /><path d="M10 10l4 4" stroke="#ccc" strokeWidth="2" /><path d="M14 3h6M17 0v6M14 8h6" stroke="#ddd" strokeWidth="1.300" /></IconButton>
        <IconButton label="Zoom all"><path d="M2 1h7v6H2zM11 1h7v6h-7zM2 9h7v6H2z" fill="#ccc" /><circle cx="13" cy="10" r="3.500" fill="#ddd" stroke="#333" /><path d="M15 12l4 4" stroke="#ccc" strokeWidth="2" /></IconButton>
        <IconButton label="Zoom extents"><path d="M5 1H2v4M15 1h3v4M2 11v4h3" stroke="#ddd" fill="none" strokeWidth="1.500" /><path d="M6 5l6-2 3 1v7l-3 2H6z" fill="#7fae62" /><path d="M20 12v4h-4z" fill="#fff" /></IconButton>
        <IconButton label="Zoom extents all"><path d="M6 0h6v6H6zM13 0h6v6h-6zM13 7h6v6h-6z" fill="#ccc" /><path d="M1 8l4-2h7v7l-3 2H1z" fill="#7fae62" /><path d="M20 12v4h-4z" fill="#fff" /></IconButton>
        <IconButton label="Region zoom"><path d="M2 1h12v11H2z" stroke="#ddd" fill="none" strokeWidth="1.500" strokeDasharray="2 2" /><circle cx="14" cy="10" r="3.500" fill="#ddd" /><path d="M16 12l4 4" stroke="#ccc" strokeWidth="2" /></IconButton>
        <IconButton label="Walk through"><path d="M3 4q3-2 5 2l-1 5H4zM5 12h3v3H5zM12 2q4-2 5 2l-2 6h-3zM11 11h3v3h-3z" fill="#ddd" /></IconButton>
        <IconButton label="Orbit"><circle cx="10" cy="9" r="5" fill="#ddd" /><path d="M9 5q5 0 5 6l-5-1z" fill="#7fae62" /><path d="M10 0v4M2 13l4-2" stroke="#ddd" strokeWidth="2" /><path d="M20 12v4h-4z" fill="#fff" /></IconButton>
        <IconButton label="Maximize viewport"><path d="M1 1h12v10H1z" fill="#ddd" /><path d="M15 5h3v10H6v-2" stroke="#ccc" fill="none" strokeWidth="1.500" /><path d="M4 3h4M4 3v4M4 3l6 6" stroke="#111" strokeWidth="1.500" /></IconButton>
      </div>
    </footer>
  );
}

/* ---------- Save dialog ---------- */

const HEAD = "h-6 border-r border-b border-r-[#e3e8ec] border-b-[#d5d5d5] pl-[6px] text-left text-[12px] font-normal";
const CELL = "h-[19px] border-r border-[#eef3f8] pl-[6px]";

function FileList() {
  return (
    <div className="flex min-w-0 flex-1 flex-col bg-white font-['Open_Sans','Noto_Sans',sans-serif] text-[11px] leading-4 text-black">
      <table className="h-full w-full table-fixed border-separate border-spacing-0">
        <colgroup>
          <col className="w-[272px]" />
          <col className="w-[120px]" />
          <col className="w-[120px]" />
          <col className="w-[80px]" />
          <col />
        </colgroup>
        <thead className="bg-gradient-to-b from-white to-[#f2f4f6]">
          <tr>
            <th className={HEAD}>Name</th>
            <th className="relative h-6 border-x border-b border-[#a6d3ea] bg-gradient-to-b from-[#f2f9fd] to-[#d9edf9] pl-[5px] text-left text-[12px] font-normal">
              Date modified
              <svg className="absolute top-0 left-1/2" width="7" height="4" viewBox="0 0 7 4" aria-hidden="true">
                <path d="M0 0h7L3.500 4z" fill="#6fa6c6" />
              </svg>
            </th>
            <th className={HEAD}>Type</th>
            <th className={HEAD}>Size</th>
            <th className="border-b border-[#d5d5d5]" aria-label="Empty" />
          </tr>
        </thead>
        <tbody>
          <tr>
            <td className={CELL}>
              <span className="flex items-center gap-[3px] pl-[2px]"><UiFileIcon />Tim.ui</span>
            </td>
            <td className={CELL}>26/06/2016 4:56 PM</td>
            <td className={CELL}>3dsMax custom u...</td>
            <td className={clsx(CELL, "pr-[7px] text-right")}>1 KB</td>
            <td />
          </tr>
          <tr>
            <td className={CELL}>
              <span className="flex items-center gap-1 pl-[3px]"><FolderIcon />OLD</span>
            </td>
            <td className={CELL}>26/06/2016 8:40 PM</td>
            <td className={CELL}>File folder</td>
            <td className={CELL} />
            <td />
          </tr>
          <tr>
            {[0, 1, 2, 3].map((i) => (
              <td key={i} className="h-full border-r border-[#eef3f8]" />
            ))}
            <td />
          </tr>
        </tbody>
      </table>
    </div>
  );
}

function SaveInTools() {
  return (
    <div className="ml-[17px] flex items-center gap-2">
      <button aria-label="Back">
        <svg width="14" height="14" viewBox="0 0 14 14">
          <circle cx="7" cy="7" r="7" fill="#777" />
          <path d="M11 7H4m3-3L4 7l3 3" stroke="#fff" strokeWidth="1.600" fill="none" />
        </svg>
      </button>
      <button aria-label="Up one level">
        <svg width="15" height="15" viewBox="0 0 15 15">
          <path d="M1 3h5l1 2h5v9H1z" fill="#e2c25a" />
          <path d="M3 7h11l-2 7H1z" fill="#f8e79c" />
          <path d="M7 12q4-2 3-7H8l3-4 3 4h-2q1 6-5 7z" fill="#2fa52f" />
        </svg>
      </button>
      <button aria-label="Create new folder">
        <svg width="16" height="15" viewBox="0 0 16 15">
          <path d="M1 3h5l1 2h5v9H1z" fill="#e2c25a" />
          <path d="M3 7h11l-2 7H1z" fill="#f8e79c" />
          <path d="M12 0l1 3 3 1-3 1-1 3-1-3-3-1 3-1z" fill="#e8502a" />
        </svg>
      </button>
      <button aria-label="View menu" className="flex items-center gap-[2px]">
        <svg width="15" height="14" viewBox="0 0 15 14">
          <path d="M0 0h15v14H0z" fill="#2f7cd6" />
          <path d="M1 3h13v10H1z" fill="#fff" />
          <path d="M3 5h2v2H3zM11 9h2v2h-2z" fill="#2f5fae" />
          <path d="M7 5h2v2H7zM3 9h2v2H3z" fill="#5a8a5a" />
          <path d="M11 5h2v2h-2zM7 9h2v2H7z" fill="#8a6a4a" />
        </svg>
        <svg width="7" height="4" viewBox="0 0 7 4">
          <path d="M0 0h7L3.500 4z" fill="#222" />
        </svg>
      </button>
    </div>
  );
}

function SaveDialog() {
  return (
    <section
      aria-label="Save Custom UI Scheme"
      className="absolute top-px right-[327px] bottom-[236px] left-px z-10 flex flex-col rounded-lg border border-[#c9d6e0] bg-[linear-gradient(180deg,#9fb0c0_0px,#8d98a6_228px,#2b3945_234px,#2b3945_100%)] px-[5px] pb-[5px] shadow-[2px_3px_12px_1px_rgba(0,0,0,0.8)]"
    >
      <div className="-mx-[5px] flex h-[27px] flex-none items-start rounded-t-lg bg-[linear-gradient(90deg,#8e9fb0_0px,#9aacbd_150px,#6b7e93_200px,#6b8099_340px,#121c27_360px,#101a25_640px,#1d2732_800px,#0f1822_1400px,#8496a6_1540px)] pl-[6px] text-[12px] text-black">
        <span className="mt-[5px]"><MaxLogo /></span>
        <h1 className="mt-[3px] ml-[5px] flex-1 font-['Open_Sans','Noto_Sans',sans-serif] leading-5">Save Custom UI Scheme</h1>
        <button aria-label="Close" className="mr-[5px] flex h-[18px] w-[46px] items-center justify-center rounded-b border border-t-0 border-[#5a1c14] bg-gradient-to-b from-[#d58b7e] via-[#bb4a35] to-[#c9624a]">
          <CloseGlyph />
        </button>
      </div>

      <div className="relative flex min-h-0 flex-1 flex-col border border-[#a4bfd0] bg-[#444] text-[11px]">
        <div className="mt-2 mr-5 flex h-[21px] flex-none items-center">
          <label htmlFor="history" className="w-[92px] text-right">History:</label>
          <div className="relative ml-[7px] flex-1">
            <select id="history" className="h-[21px] w-full appearance-none border-2 border-r-0 border-t-black border-b-[#222] border-l-black bg-gradient-to-b from-[#ececec] to-[#cfcfcf] px-px text-black">
              <option>Z:\3dsmax\Custom UI</option>
            </select>
            <Caret className="absolute top-[9px] right-[4px]" />
          </div>
        </div>
        <div className="mt-[11px] flex h-6 flex-none items-center">
          <label htmlFor="save-in" className="w-[91px] text-right">
            Save <u>i</u>n:
          </label>
          <div className="relative ml-2">
            <select id="save-in" className="h-6 w-[260px] appearance-none border-2 border-black bg-white pl-[23px] font-['Open_Sans','Noto_Sans',sans-serif] text-[11px] text-black">
              <option>Custom UI</option>
            </select>
            <span className="pointer-events-none absolute top-1 left-[6px]"><FolderIcon /></span>
            <span className="pointer-events-none absolute top-[2px] right-0 flex h-5 w-[18px] items-center justify-center border-l border-black bg-white">
              <Caret />
            </span>
          </div>
          <SaveInTools />
        </div>

        <div className="mt-[5px] mr-5 mb-2 ml-[6px] flex min-h-0 flex-1 gap-[6px]">
          <nav className="mb-1 flex w-[87px] flex-none flex-col gap-3 bg-[#f2f2f2] pt-[7px] font-['Open_Sans','Noto_Sans',sans-serif] text-[12px] text-black">
            {PLACES.map(({ name, Icon }) => (
              <a key={name} href={`#${name}`} className="flex h-12 flex-col items-center leading-4 whitespace-nowrap">
                <Icon />
                {name}
              </a>
            ))}
          </nav>
          <div className="flex min-w-0 flex-1 flex-col">
            <FileList />
            <div className="-mr-[2px] mt-2 flex flex-none gap-2">
              <div className="flex flex-1 flex-col gap-[5px]">
                <div className="flex h-[22px] items-center">
                  <label htmlFor="file-name" className="w-24 pl-px">
                    File <u>n</u>ame:
                  </label>
                  <div className="relative flex-1">
                    <input id="file-name" defaultValue="Tims_UI_2016 06 26 V4.ui" className="h-[22px] w-full border-2 border-t-black border-r-[#222] border-b-[#222] border-l-black bg-white px-1 text-black" />
                    <Caret className="absolute top-[10px] right-[5px]" />
                  </div>
                </div>
                <div className="flex h-[21px] items-center">
                  <label htmlFor="file-type" className="w-24 pl-px">
                    Save as <u>t</u>ype:
                  </label>
                  <div className="relative flex-1">
                    <select id="file-type" className="h-[21px] w-full appearance-none border-2 border-t-black border-r-[#222] border-b-[#222] border-l-black bg-gradient-to-b from-[#e4f3fb] via-[#b4dcf2] to-[#68b3dd] px-px text-black">
                      {FILE_TYPES.map((type) => (
                        <option key={type}>{type}</option>
                      ))}
                    </select>
                    <Caret className="absolute top-[9px] right-[5px]" />
                    <ul role="listbox" aria-label="Save as type" className="absolute top-full -right-px left-0 z-20 border border-[#ddd] bg-[#565656] text-[#ddd] shadow-[2px_2px_4px_rgba(0,0,0,0.6)]">
                      {FILE_TYPES.map((type, i) => (
                        <li
                          key={type}
                          role="option"
                          aria-selected={i === 0}
                          className={clsx("h-[13px] pl-[2px] leading-[13px]", i === 0 && "bg-[#3399ff] text-white")}
                        >
                          {type}
                        </li>
                      ))}
                    </ul>
                  </div>
                </div>
              </div>
              <button aria-label="Increment and save" className={clsx("h-6 w-6 text-[12px]", RAISED)}>+</button>
              <div className="-ml-[3px] flex w-[75px] flex-col gap-[2px]">
                <button className={clsx("h-6", RAISED)}>
                  <u>S</u>ave
                </button>
                <button className={clsx("h-6", RAISED)}>Cancel</button>
              </div>
            </div>
          </div>
        </div>
        <svg className="absolute right-[2px] bottom-[2px]" width="11" height="11" viewBox="0 0 11 11" aria-hidden="true">
          <path d="M8 0h2v2H8zM4 4h2v2H4zM8 4h2v2H8zM0 8h2v2H0zM4 8h2v2H4zM8 8h2v2H8z" fill="#000" />
        </svg>
        <svg className="absolute right-[97px] bottom-0 z-30" width="12" height="19" viewBox="0 0 12 19" aria-hidden="true">
          <path d="M.5.5v16l4-3.500 2.500 6 2.500-1-2.500-5.500H12z" fill="#fff" stroke="#000" strokeWidth=".8" />
        </svg>
      </div>
    </section>
  );
}

function Watermark() {
  return (
    <div className="pointer-events-none absolute bottom-[10px] left-[30px] z-10 flex items-center gap-1 opacity-75">
      <svg width="36" height="48" viewBox="0 0 36 48" aria-hidden="true">
        <g fill="#777">
          <path d="M1 4h6v5H1zM12 1h5v4h-5zM10 9h9v8h-9zM24 3h11v8H24zM22 14h11v10H22zM12 28h7v8h-7zM22 28h12v17H22zM12 40h8v6h-8z" />
          <path d="M5 18h4v4H5zM13 20h4v4h-4zM5 24h3v3H5z" opacity=".6" />
        </g>
      </svg>
      <span className="font-['Liberation_Sans',sans-serif] text-[36px] leading-[44px] font-bold text-[#776f6b]">
        VIZ<span className="text-[#e07f1e]">GUY</span>
      </span>
    </div>
  );
}

export default function App() {
  return (
    <main className="relative flex h-screen flex-col overflow-hidden bg-[#444] font-['Roboto','Noto_Sans',sans-serif] text-[#c8c8c8]">
      <TopBar />
      <div className="flex min-h-0 flex-1">
        <LeftTools />
        <div className="ml-[2px] flex min-w-0 flex-1 flex-col">
          <Viewports />
          <Timeline />
        </div>
        <CommandPanel />
      </div>
      <StatusBar />
      <SaveDialog />
      <Watermark />
    </main>
  );
}
